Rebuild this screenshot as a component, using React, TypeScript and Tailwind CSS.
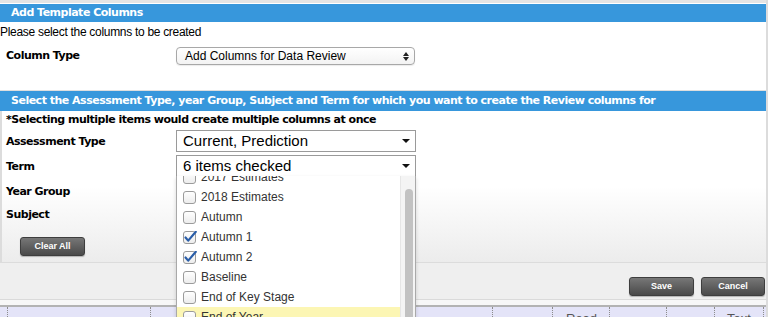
const TERMS = [
  { label: "2017 Estimates", checked: false },
  { label: "2018 Estimates", checked: false },
  { label: "Autumn", checked: false },
  { label: "Autumn 1", checked: true },
  { label: "Autumn 2", checked: true },
  { label: "Baseline", checked: false },
  { label: "End of Key Stage", checked: false },
  { label: "End of Year", checked: false, hover: true },
  { label: "Spring", checked: false },
];

const SEPARATORS = [7, 150, 492, 552, 609, 666, 714, 763];

export default function App() {
  return (
    <main className="relative h-[317px] w-[768px] overflow-hidden bg-white font-['Liberation_Sans',Arial,sans-serif] text-black">
      <div className="flex">
        <div className="w-[766px]">
          <div className="h-[3px] bg-[#e4e4e4]" />
          <div className="h-[1px] bg-white" />

          <div className="flex h-[18px] items-center bg-[#3797dc] pl-[11px] font-['DejaVu_Sans',Verdana,sans-serif] text-[11px] font-bold tracking-[-0.5px] text-white">
            Add Template Columns
          </div>

          <p className="flex h-[20px] items-center text-[12px] tracking-[-0.3px]">
            Please select the columns to be created
          </p>

          <div className="mt-[3px] flex h-[22px] items-center">
            <span className="w-[176px] pl-[6px] font-['DejaVu_Sans',Verdana,sans-serif] text-[11px] font-bold tracking-[-0.5px]">
              Column Type
            </span>
            <NativeSelect value="Add Columns for Data Review" />
          </div>

          <div className="h-[23px]" />
          <div className="h-[1px] bg-[#dedede]" />

          <div className="flex h-[20px] items-center bg-[#3797dc] pl-[11px] font-['DejaVu_Sans',Verdana,sans-serif] text-[11px] font-bold tracking-[-0.5px] text-white">
            Select the Assessment Type, year Group, Subject and Term for which
            you want to create the Review columns for
          </div>

          <section className="h-[152px] border-b border-l-2 border-[#dcdcdc] bg-linear-to-b from-white via-white to-[#ececec] font-['DejaVu_Sans',Verdana,sans-serif] text-[11px] font-bold tracking-[-0.5px]">
            <p className="flex h-[19px] items-center pl-[4px]">
              *Selecting multiple items would create multiple columns at once
            </p>

            <FieldRow label="Assessment Type" value="Current, Prediction" />
            <div className="h-[3px]" />
            <FieldRow label="Term" value="6 items checked" />

            <div className="flex h-[23px] items-end pl-[4px]">Year Group</div>
            <div className="flex h-[30px] items-center pl-[4px]">Subject</div>

            <div className="pl-[18px] pt-[7px]">
              <DarkButton className="w-[65px]">Clear All</DarkButton>
            </div>
          </section>

          <div className="flex h-[36px] items-end justify-end gap-[7px] bg-[#efefef] pb-[3px] pr-[1px]">
            <DarkButton className="w-[65px]">Save</DarkButton>
            <DarkButton className="w-[64px]">Cancel</DarkButton>
          </div>
          <div className="h-[1px] bg-[#dadada]" />
          <div className="h-[5px] bg-[#f7f7f7]" />
          <div className="h-[2px] bg-[#b3b3b3]" />

          <div className="relative h-[24px] bg-[#e4e4f8] text-[13px] text-[#555]">
            {SEPARATORS.map((x) => (
              <span
                key={x}
                className="absolute top-0 h-full border-l border-dotted border-[#8c8c8c]"
                style={{ left: x }}
              />
            ))}
            <span className="absolute left-[566px] top-[2px]">Read</span>
            <span className="absolute left-[727px] top-[2px]">Text</span>
          </div>
        </div>
        <div className="h-[317px] w-[2px] bg-[#dcdcdc]" />
      </div>

      <TermDropdown />
    </main>
  );
}

function NativeSelect({ value }: { value: string }) {
  return (
    <div className="flex h-[18px] w-[239px] items-center justify-between rounded-[4px] border border-[#a8a8a8] bg-linear-to-b from-white to-[#f3f3f3] pl-[8px] pr-[5px] text-[12px] shadow-[0_1px_1px_rgba(0,0,0,0.08)]">
      <span>{value}</span>
      <span className="flex flex-col items-center gap-[1px]">
        <span className="h-0 w-0 border-x-[3px] border-b-[4px] border-x-transparent border-b-[#222]" />
        <span className="h-0 w-0 border-x-[3px] border-t-[4px] border-x-transparent border-t-[#222]" />
      </span>
    </div>
  );
}

function FieldRow({ label, value }: { label: string; value: string }) {
  return (
    <div className="flex h-[22px] items-center">
      <span className="w-[174px] pl-[4px] pt-[3px]">{label}</span>
      <div className="flex h-[22px] w-[240px] items-center justify-between border border-[#9a9a9a] bg-white pl-[6px] pr-[5px] font-['Liberation_Sans',Arial,sans-serif] text-[15px] font-normal tracking-normal">
        <span>{value}</span>
        <span className="h-0 w-0 border-x-[4px] border-t-[4px] border-x-transparent border-t-[#111]" />
      </div>
    </div>
  );
}

function DarkButton({
  children,
  className,
}: {
  children: React.ReactNode;
  className?: string;
}) {
  return (
    <button
      type="button"
      className={
        "flex h-[19px] items-center justify-center rounded-[3px] border border-[#3e3e3e] bg-linear-to-b from-[#777] to-[#4a4a4a] font-['Liberation_Sans',Arial,sans-serif] text-[9px] font-bold tracking-normal text-white shadow-[0_1px_1px_rgba(0,0,0,0.25)] " +
        (className ?? "")
      }
    >
      {children}
    </button>
  );
}

function TermDropdown() {
  return (
    <div className="absolute left-[176px] top-[176px] flex h-[150px] w-[240px] overflow-hidden border-x border-[#a9a9a9] bg-white text-[12px] text-[#333] shadow-[0_2px_4px_rgba(0,0,0,0.15)]">
      <ul className="-mt-[9px] flex-1">
        {TERMS.map((term) => (
          <li
            key={term.label}
            className={
              term.hover
                ? "flex h-[20px] items-center gap-[4px] bg-[#fcf6b4] pl-[6px]"
                : "flex h-[20px] items-center gap-[4px] pl-[6px]"
            }
          >
            <Checkbox checked={term.checked} />
            <span>{term.label}</span>
          </li>
        ))}
      </ul>
      <div className="w-[15px] border-l border-[#e6e6e6] bg-[#f4f4f4] pl-[4px] pt-[13px]">
        <div className="h-[200px] w-[8px] rounded-full bg-[#c2c2c2]" />
      </div>
    </div>
  );
}

function Checkbox({ checked }: { checked: boolean }) {
  return (
    <svg width="14" height="13" viewBox="0 0 14 13" className="shrink-0">
      <defs>
        <linearGradient id="cb" x1="0" y1="0" x2="0" y2="1">
          <stop offset="0" stopColor="#ffffff" />
          <stop offset="1" stopColor="#ececec" />
        </linearGradient>
      </defs>
      <rect
        x="0.5"
        y="0.5"
        width="12"
        height="12"
        rx="2.5"
        fill="url(#cb)"
        stroke="#9b9b9b"
      />
      {checked && (
        <path
          d="M2.5 6.5 L5.2 9.6 L12.8 0.8"
          fill="none"
          stroke="#2b5ea8"
          strokeWidth="2.2"
          strokeLinecap="round"
          strokeLinejoin="round"
        />
      )}
    </svg>
  );
}
